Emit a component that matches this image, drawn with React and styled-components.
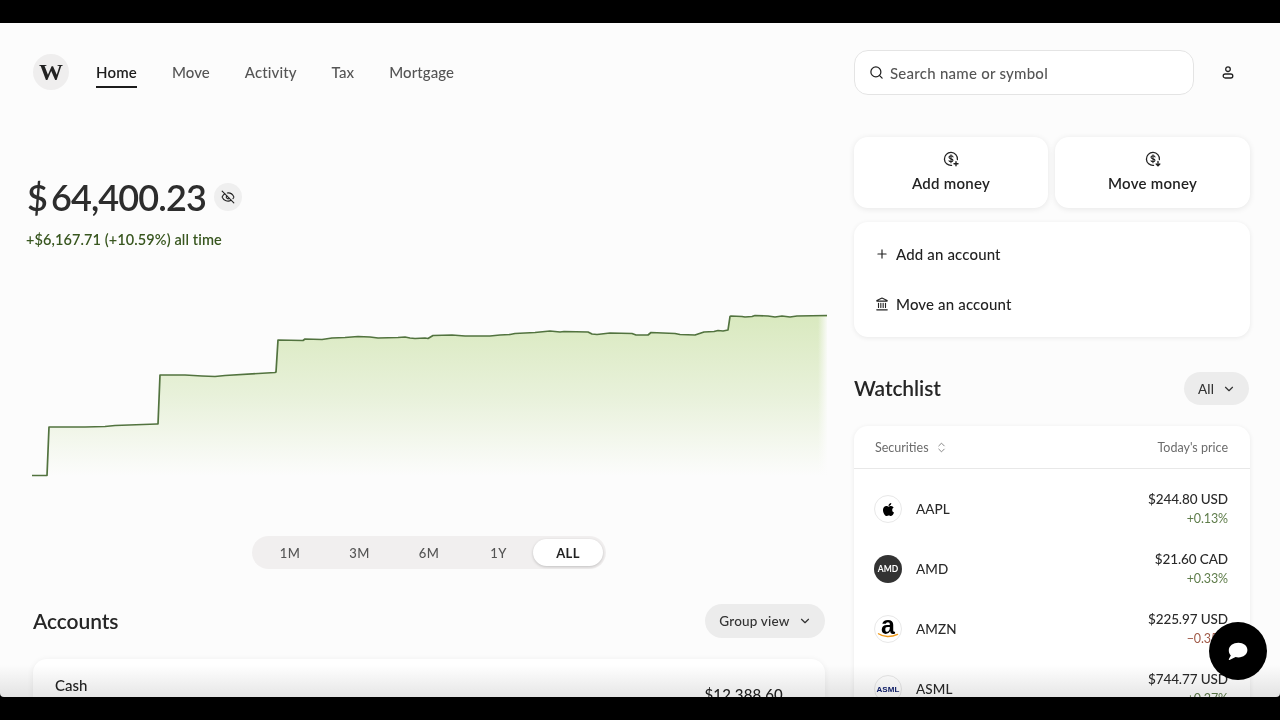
import React from 'react';
import styled, { createGlobalStyle } from 'styled-components';
import { Search, Plus, Landmark, ChevronDown, ChevronsUpDown, EyeOff } from 'lucide-react';
import { FaApple } from 'react-icons/fa';

const Global = createGlobalStyle`
  html, body { margin: 0; padding: 0; background: #000; }
  body { font-family: Lato, "Noto Sans", sans-serif; color: #2a2a2a; }
  * { box-sizing: border-box; }
`;

const Screen = styled.div`
  width: 1280px; height: 720px; background: #000; padding: 23px 0; overflow: hidden;
`;
const Frame = styled.div`
  position: relative; height: 674px; background: #fcfcfc; overflow: hidden;
  border-radius: 0 0 4px 4px;
  display: grid; grid-template-columns: 800px 396px; column-gap: 28px; padding-left: 26px;
`;
const BottomFade = styled.div`
  position: absolute; left: 0; right: 0; bottom: 0; height: 32px; pointer-events: none;
  mix-blend-mode: multiply;
  background: linear-gradient(to bottom, #fff, #e6e6e6);
`;
const ChatBubble = styled.div`
  position: absolute; right: 13px; bottom: 17px; width: 58px; height: 58px; border-radius: 50%;
  background: #000; display: flex; align-items: center; justify-content: center;
`;
const LeftColumn = styled.div`display: flex; flex-direction: column; min-width: 0;`;
const RightColumn = styled.div`display: flex; flex-direction: column; min-width: 0;`;

const Nav = styled.nav`
  margin-top: 27px; height: 44px; padding-left: 7px; display: flex; align-items: center;
`;
const Logo = styled.div`
  width: 36px; height: 36px; border-radius: 50%; background: #efeeee; margin-right: 27px;
  display: flex; align-items: center; justify-content: center;
  font: 700 24px "Liberation Serif", serif; color: #222;
`;
const NavItem = styled.a`
  position: relative; font-size: 15px; letter-spacing: ${p => (p.$active ? '.15px' : '.1px')}; line-height: 20px;
  color: ${p => (p.$active ? '#1c1c1c' : '#555')}; font-weight: ${p => (p.$active ? 600 : 500)};
  margin-right: 35px;
  ${p => p.$active && `&::after { content: ''; position: absolute; left: 0; right: 0; bottom: -6px; height: 2px; background: #1c1c1c; }`}
`;

const Balance = styled.div`
  margin-top: 81px; height: 44px; display: flex; align-items: center;
  font-size: 36px; font-weight: 600; color: #2d2d2d; letter-spacing: -.9px;
`;
const Dollar = styled.span`margin-left: 1px; margin-right: 4px;`;
const Peek = styled.button`
  width: 28px; height: 28px; margin-left: 8px; border: 0; padding: 0; border-radius: 50%;
  background: #efefef; display: flex; align-items: center; justify-content: center; color: #222;
`;
const Gain = styled.div`
  margin-top: 11px; height: 20px; line-height: 20px; font-size: 14.5px; font-weight: 600;
  color: #38561f; letter-spacing: .1px;
`;
const ChartWrap = styled.div`margin-top: 60px; height: 170px; margin-left: 6px;`;

const RangeRow = styled.div`margin-top: 56px; display: flex; justify-content: center;`;
const RangePill = styled.div`
  display: flex; padding: 3px; background: #f1efef; border-radius: 17px; margin-left: 6px;
`;
const RangeItem = styled.div`
  width: 69.5px; height: 27px; border-radius: 14px; display: flex; align-items: center; justify-content: center;
  font-size: 13px; letter-spacing: .4px; font-weight: ${p => (p.$active ? 700 : 500)};
  color: ${p => (p.$active ? '#222' : '#555')}; background: ${p => (p.$active ? '#fff' : 'transparent')};
  box-shadow: ${p => (p.$active ? '0 1px 3px rgba(0,0,0,.2)' : 'none')};
`;
const SectionHead = styled.div`
  display: flex; align-items: center; justify-content: space-between;
  height: ${p => p.$h}px; margin-top: ${p => p.$top}px; padding-left: ${p => p.$inset || 0}px;
`;
const SectionTitle = styled.h2`
  margin: 0 0 2px; font-size: 21px; font-weight: 600; color: #262626; letter-spacing: -.1px;
`;
const FilterPill = styled.button`
  height: ${p => p.$h}px; width: ${p => p.$w}px; border: 0; border-radius: 17px; background: #ececec;
  display: flex; align-items: center; justify-content: center; gap: 8px;
  font: 500 13.5px Lato, sans-serif; color: #333; letter-spacing: .2px; margin-right: ${p => p.$right || 0}px;
  padding: 0 0 0 1px;
`;
const AccountCard = styled.div`
  margin: 21px 1px 0 7px; height: 120px; background: #fff; border-radius: 14px 14px 0 0;
  box-shadow: 0 1px 6px rgba(0,0,0,.07); padding: 16px 22px 0 22px;
  display: flex; justify-content: space-between;
`;
const CardName = styled.div`font-size: 15px; font-weight: 500; line-height: 20px; color: #222;`;
const CardValue = styled.div`font-size: 15px; font-weight: 500; line-height: 20px; margin-top: 9px; margin-right: 20px; color: #222; letter-spacing: .2px;`;

const SearchRow = styled.div`
  margin-top: 27px; display: flex; align-items: center; justify-content: space-between; height: 45px;
`;
const SearchBox = styled.div`
  width: 340px; height: 45px; border: 1px solid #e4e4e4; border-radius: 14px; background: #fff;
  display: flex; align-items: center; gap: 6px; padding-left: 14px;
  font-size: 15px; font-weight: 500; color: #555; letter-spacing: .25px;
`;
const Profile = styled.div`margin-right: 16px; display: flex; color: #222;`;
const Actions = styled.div`
  margin-top: 42px; display: grid; grid-template-columns: 194px 195px; column-gap: 7px;
`;
const ActionCard = styled.button`
  height: 71px; background: #fff; border: 0; border-radius: 14px; box-shadow: 0 1px 6px rgba(0,0,0,.09);
  display: flex; flex-direction: column; align-items: center; padding: 14px 0 0; gap: 7px;
  font: 600 15px Lato, sans-serif; color: #222; letter-spacing: .25px;
`;
const LinksCard = styled.div`
  margin-top: 14px; height: 115px; background: #fff; border-radius: 14px;
  box-shadow: 0 1px 5px rgba(0,0,0,.08); padding: 7px 21px; display: flex; flex-direction: column;
`;
const LinkRow = styled.div`
  height: 50px; display: flex; align-items: center; gap: 7px;
  font-size: 15px; font-weight: 500; color: #222; letter-spacing: .15px;
`;
const Table = styled.div`
  margin-top: 21px; background: #fff; border-radius: 14px 14px 0 0; box-shadow: 0 1px 5px rgba(0,0,0,.08);
`;
const TableHead = styled.div`
  height: 43px; padding: 0 22px 0 21px; border-bottom: 1px solid #e8e8e8;
  display: flex; align-items: center; justify-content: space-between;
  font-size: 12.5px; color: #6c6c6c;
`;
const SortLabel = styled.span`display: flex; align-items: center; gap: 6px;`;
const Row = styled.div`
  height: 60px; padding: 0 22px 0 20px; display: flex; align-items: center; justify-content: space-between;
`;
const RowFirst = styled(Row)`margin-top: 10px;`;
const Security = styled.div`
  display: flex; align-items: center; gap: 14px; font-size: 13.5px; font-weight: 500; color: #2a2a2a; letter-spacing: .1px;
`;
const Badge = styled.div`
  width: 28px; height: 28px; border-radius: 50%; overflow: hidden; flex: none;
  display: flex; flex-direction: column; align-items: center; justify-content: center;
  background: ${p => (p.$dark ? '#333' : '#fff')};
  border: ${p => (p.$dark ? '0' : '1px solid #e8e8e8')};
  color: ${p => (p.$dark ? '#fff' : '#000')};
`;
const AmdMark = styled.span`font-size: 8.5px; font-weight: 700; letter-spacing: 0;`;
const AsmlMark = styled.span`font: 700 8px "Liberation Sans", sans-serif; color: #10206f;`;
const AmazonLetter = styled.span`font: 700 25px/16px "Liberation Sans", sans-serif; margin-top: -4px;`;
const Price = styled.div`text-align: right; line-height: 20px;`;
const PriceMain = styled.div`font-size: 13.5px; font-weight: 500; color: #2a2a2a; letter-spacing: -.1px;`;
const Delta = styled.div`font-size: 12.5px; color: ${p => (p.$down ? '#a05a48' : '#5f7d4b')}; letter-spacing: -.1px;`;

const pts = [[32,475.5],[47,475.5],[49,427],[85,427],[105,426.5],[115,425.5],[157,424],[158,424],[160,375],[185,375],[202,376],[215,376.5],[225,375.5],[275,372.5],[276,372],[278,340],[303,340.5],[305,339],[322,339.5],[332,338],[345,337.5],[358,336.5],[370,337],[378,338],[398,337.5],[405,337],[410,338],[415,338.5],[425,338],[428,338.5],[433,335.5],[452,335],[465,336],[490,336],[500,335],[510,334.5],[515,333.5],[535,332.5],[545,331.5],[550,331],[560,332],[564,331.5],[588,332],[592,334],[597,334.5],[610,333],[632,333.5],[636,335],[648,335],[651,332.5],[675,333.5],[680,334.5],[695,335],[704,332],[714,331.5],[718,330.5],[723,331],[728,330],[730,316.5],[731,316],[742,316.5],[745,317],[752,316.5],[755,315.5],[768,316],[775,317],[782,316],[790,317],[797,316],[827,315.5]];
const linePath = pts.map((p, i) => `${i ? 'L' : 'M'}${p[0]} ${p[1]}`).join(' ');

function Chart() {
  return (
    <svg width="796" height="170" viewBox="32 310 796 170" style={{ display: 'block' }}>
      <defs>
        <linearGradient id="fillV" x1="0" y1="315" x2="0" y2="476" gradientUnits="userSpaceOnUse">
          <stop offset="0" stopColor="#d9e9bf" />
          <stop offset="0.5" stopColor="#e8f1da" />
          <stop offset="1" stopColor="#fcfcfc" />
        </linearGradient>
        <linearGradient id="fadeH" x1="818" y1="0" x2="828" y2="0" gradientUnits="userSpaceOnUse">
          <stop offset="0" stopColor="#fcfcfc" stopOpacity="0" />
          <stop offset="1" stopColor="#fcfcfc" />
        </linearGradient>
      </defs>
      <path d={`${linePath} L827 476 L32 476 Z`} fill="url(#fillV)" />
      <rect x="818" y="317" width="10" height="160" fill="url(#fadeH)" />
      <path d={linePath} fill="none" stroke="#52733f" strokeWidth="1.7" strokeLinejoin="round" />
    </svg>
  );
}

function MoneyIcon({ move }) {
  return (
    <svg width="16" height="16" viewBox="0 0 16 16" fill="none" stroke="#222" strokeWidth="1.3" strokeLinecap="round">
      <path d="M14.4 8.6A6.5 6.5 0 1 0 8.6 14.4" />
      <path d="M10 5.900c-.3-.7-1-1.100-2-1.100-1.100 0-2 .5-2 1.500 0 2.100 4 1 4 3 0 1-.9 1.500-2 1.500-1 0-1.700-.4-2-1.100M8 3.800v8" strokeWidth="1.1" />
      {move
        ? <path d="M13 10.500v4M11.200 13l1.800 1.800 1.800-1.800" strokeWidth="1.4" />
        : <path d="M13 10.800v4M11 12.800h4" strokeWidth="1.4" />}
    </svg>
  );
}

function UserIcon() {
  return (
    <svg width="12" height="13" viewBox="0 0 12 13" fill="none" stroke="#222" strokeWidth="1.3">
      <circle cx="6" cy="3.2" r="2.3" />
      <rect x="1.2" y="8" width="9.6" height="4" rx="2" />
    </svg>
  );
}

function ChatIcon() {
  return (
    <svg width="20" height="19" viewBox="0 0 20 19">
      <path fill="#fff" d="M10.400 .8c5 0 9 2.900 9 7.200 0 4.400-4 7.400-9 7.400-1 0-2-.1-2.800-.4L1.500 18c-.5.2-.9-.2-.7-.7l2-3.900C1.300 12 .8 10.200 .8 8.300 .8 3.900 5.300 .8 10.400 .8z" />
    </svg>
  );
}

function AmazonSmile() {
  return (
    <svg width="22" height="5" viewBox="0 0 22 5" fill="none" stroke="#f09a1a" strokeWidth="1.4" strokeLinecap="round">
      <path d="M1.500 .8c4.800 3.400 12.500 3.600 19 .6" />
    </svg>
  );
}

const ranges = ['1M', '3M', '6M', '1Y', 'ALL'];
const navItems = ['Move', 'Activity', 'Tax', 'Mortgage'];

export default function App() {
  return (
    <Screen>
      <Global />
      <Frame>
        <LeftColumn>
          <Nav>
            <Logo>W</Logo>
            <NavItem $active>Home</NavItem>
            {navItems.map(n => <NavItem key={n}>{n}</NavItem>)}
          </Nav>
          <Balance>
            <Dollar>$</Dollar>64,400.23
            <Peek><EyeOff size={14} strokeWidth={1.8} /></Peek>
          </Balance>
          <Gain>+$6,167.71 (+10.59%) all time</Gain>
          <ChartWrap><Chart /></ChartWrap>
          <RangeRow>
            <RangePill>
              {ranges.map(r => <RangeItem key={r} $active={r === 'ALL'}>{r}</RangeItem>)}
            </RangePill>
          </RangeRow>
          <SectionHead $top={35} $inset={7} $h={34}>
            <SectionTitle>Accounts</SectionTitle>
            <FilterPill $w={120} $h={34} $right={1}>Group view <ChevronDown size={14} /></FilterPill>
          </SectionHead>
          <AccountCard>
            <CardName>Cash</CardName>
            <CardValue>$12,388.60</CardValue>
          </AccountCard>
        </LeftColumn>
        <RightColumn>
          <SearchRow>
            <SearchBox><Search size={15} color="#222" strokeWidth={2} />Search name or symbol</SearchBox>
            <Profile><UserIcon /></Profile>
          </SearchRow>
          <Actions>
            <ActionCard><MoneyIcon />Add money</ActionCard>
            <ActionCard><MoneyIcon move />Move money</ActionCard>
          </Actions>
          <LinksCard>
            <LinkRow><Plus size={14} strokeWidth={2} />Add an account</LinkRow>
            <LinkRow><Landmark size={14} strokeWidth={1.9} />Move an account</LinkRow>
          </LinksCard>
          <SectionHead $top={35} $h={33}>
            <SectionTitle>Watchlist</SectionTitle>
            <FilterPill $w={65} $h={33} $right={1}>All <ChevronDown size={14} /></FilterPill>
          </SectionHead>
          <Table>
            <TableHead>
              <SortLabel>Securities <ChevronsUpDown size={13} strokeWidth={1.5} /></SortLabel>
              <span>Today's price</span>
            </TableHead>
            <RowFirst>
              <Security><Badge><FaApple size={15} /></Badge>AAPL</Security>
              <Price><PriceMain>$244.80 USD</PriceMain><Delta>+0.13%</Delta></Price>
            </RowFirst>
            <Row>
              <Security><Badge $dark><AmdMark>AMD</AmdMark></Badge>AMD</Security>
              <Price><PriceMain>$21.60 CAD</PriceMain><Delta>+0.33%</Delta></Price>
            </Row>
            <Row>
              <Security><Badge><AmazonLetter>a</AmazonLetter><AmazonSmile /></Badge>AMZN</Security>
              <Price><PriceMain>$225.97 USD</PriceMain><Delta $down>−0.35%</Delta></Price>
            </Row>
            <Row>
              <Security><Badge><AsmlMark>ASML</AsmlMark></Badge>ASML</Security>
              <Price><PriceMain>$744.77 USD</PriceMain><Delta>+0.27%</Delta></Price>
            </Row>
          </Table>
        </RightColumn>
        <BottomFade />
        <ChatBubble><ChatIcon /></ChatBubble>
      </Frame>
    </Screen>
  );
}
